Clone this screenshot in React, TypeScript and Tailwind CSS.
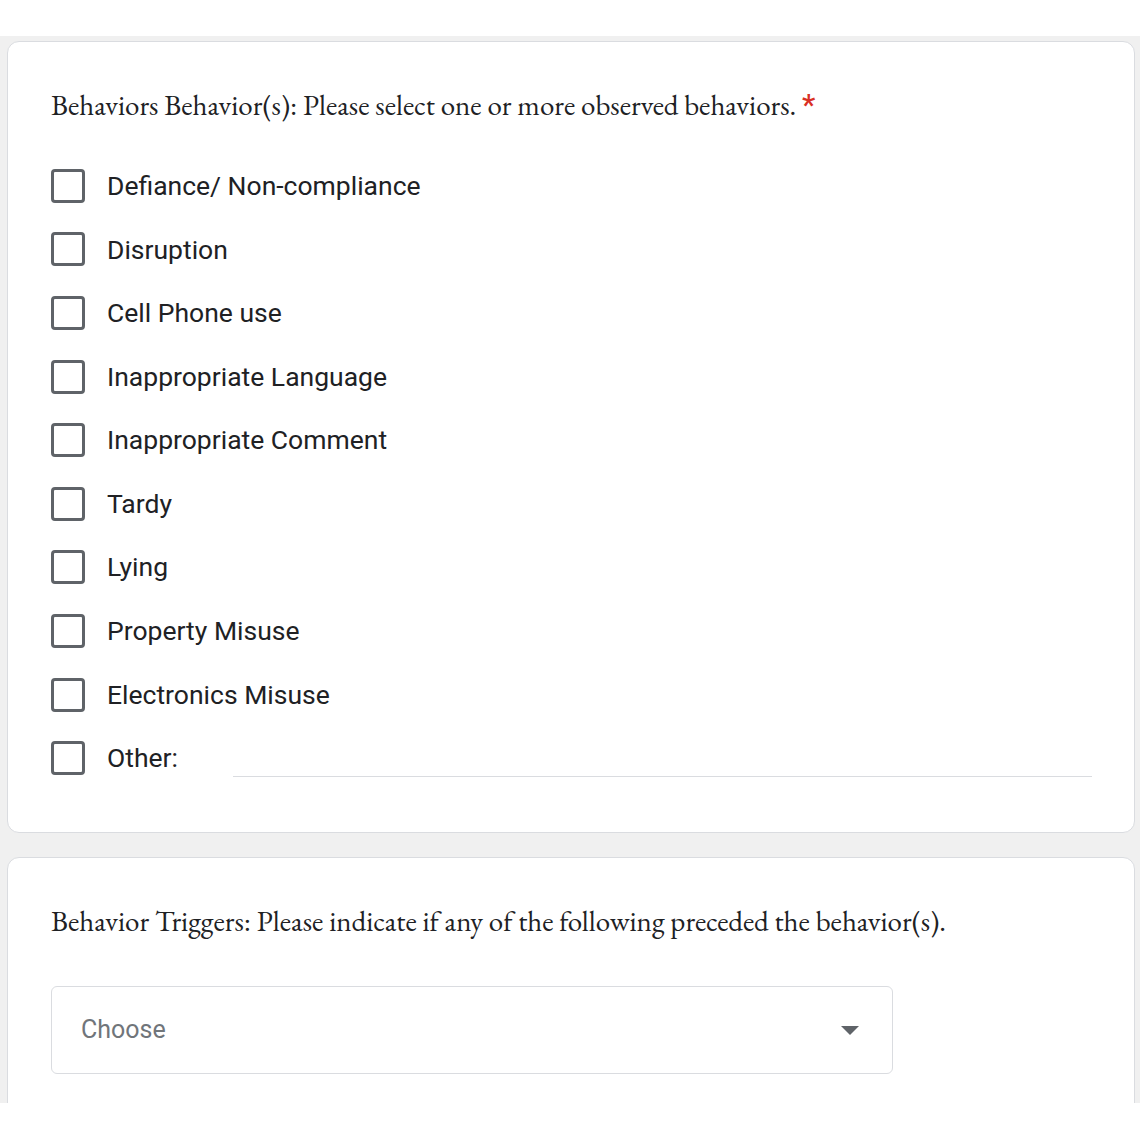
import React, { useState } from "react";

const behaviors = [
  "Defiance/ Non-compliance",
  "Disruption",
  "Cell Phone use",
  "Inappropriate Language",
  "Inappropriate Comment",
  "Tardy",
  "Lying",
  "Property Misuse",
  "Electronics Misuse",
];

const serif = "font-['EB_Garamond','Liberation_Serif',serif]";
const sans = "font-['Roboto','Liberation_Sans',sans-serif]";

const Checkbox: React.FC<{ checked: boolean; onClick: () => void }> = ({
  checked,
  onClick,
}) => (
  <button
    type="button"
    onClick={onClick}
    className="w-[34px] h-[34px] shrink-0 rounded-[4px] border-[3px] border-[#5f6368] bg-white flex items-center justify-center"
  >
    {checked && (
      <svg viewBox="0 0 24 24" className="w-6 h-6 text-[#5f6368]">
        <path
          d="M5 12l5 5 9-10"
          fill="none"
          stroke="currentColor"
          strokeWidth="3"
        />
      </svg>
    )}
  </button>
);

const App: React.FC = () => {
  const [selected, setSelected] = useState<string[]>([]);
  const [other, setOther] = useState("");

  const toggle = (name: string) => {
    setSelected((prev) =>
      prev.includes(name) ? prev.filter((n) => n !== name) : [...prev, name]
    );
  };

  return (
    <div className="w-[1140px] h-[1140px] bg-white flex flex-col overflow-hidden">
      <div className="h-[36px] shrink-0 bg-white" />
      <div className="h-[1067px] shrink-0 bg-[#f0f0f0] pt-[5px] pl-[7px] pr-[5px] flex flex-col gap-[24px] overflow-hidden">
        {/* Behaviors card */}
        <div className="h-[792px] shrink-0 bg-white border border-[#dadce0] rounded-[12px] pl-[43px] pr-[42px] pt-[46px]">
          <div className={`${serif} text-[29px] leading-[34px] text-[#202124]`}>
            Behaviors Behavior(s): Please select one or more observed behaviors.{" "}
            <span className={`${sans} text-[30px] font-medium text-[#d93025]`}>*</span>
          </div>
          <div className="mt-[32px] flex flex-col">
            {behaviors.map((b) => (
              <label
                key={b}
                className="h-[63.6px] flex items-center gap-[22px] cursor-pointer"
              >
                <Checkbox
                  checked={selected.includes(b)}
                  onClick={() => toggle(b)}
                />
                <span className={`${sans} text-[26.5px] text-[#202124]`}>{b}</span>
              </label>
            ))}
            <div className="h-[63.6px] flex items-center gap-[22px]">
              <Checkbox
                checked={selected.includes("Other")}
                onClick={() => toggle("Other")}
              />
              <span className={`${sans} text-[26.5px] text-[#202124]`}>Other:</span>
              <input
                value={other}
                onChange={(e) => setOther(e.target.value)}
                className={`${sans} ml-[33px] mt-[4px] flex-1 h-[34px] border-b border-[#dadce0] outline-none text-[22px] text-[#202124]`}
              />
            </div>
          </div>
        </div>

        {/* Triggers card */}
        <div className="h-[300px] shrink-0 bg-white border border-[#dadce0] rounded-[12px] pl-[43px] pt-[46px]">
          <div className={`${serif} text-[29px] leading-[34px] text-[#202124]`}>
            Behavior Triggers: Please indicate if any of the following preceded the
            behavior(s).
          </div>
          <button
            type="button"
            className="mt-[48px] w-[842px] h-[88px] border border-[#dadce0] rounded-[6px] flex items-center justify-between pl-[29px] pr-[33px]"
          >
            <span className={`${sans} text-[25px] text-[#70757a]`}>Choose</span>
            <svg viewBox="0 0 18 9" className="w-[18px] h-[9px]">
              <path d="M0 0h18L9 9z" fill="#5f6368" />
            </svg>
          </button>
        </div>
      </div>
      <div className="flex-1 bg-white" />
    </div>
  );
};

export default App;
